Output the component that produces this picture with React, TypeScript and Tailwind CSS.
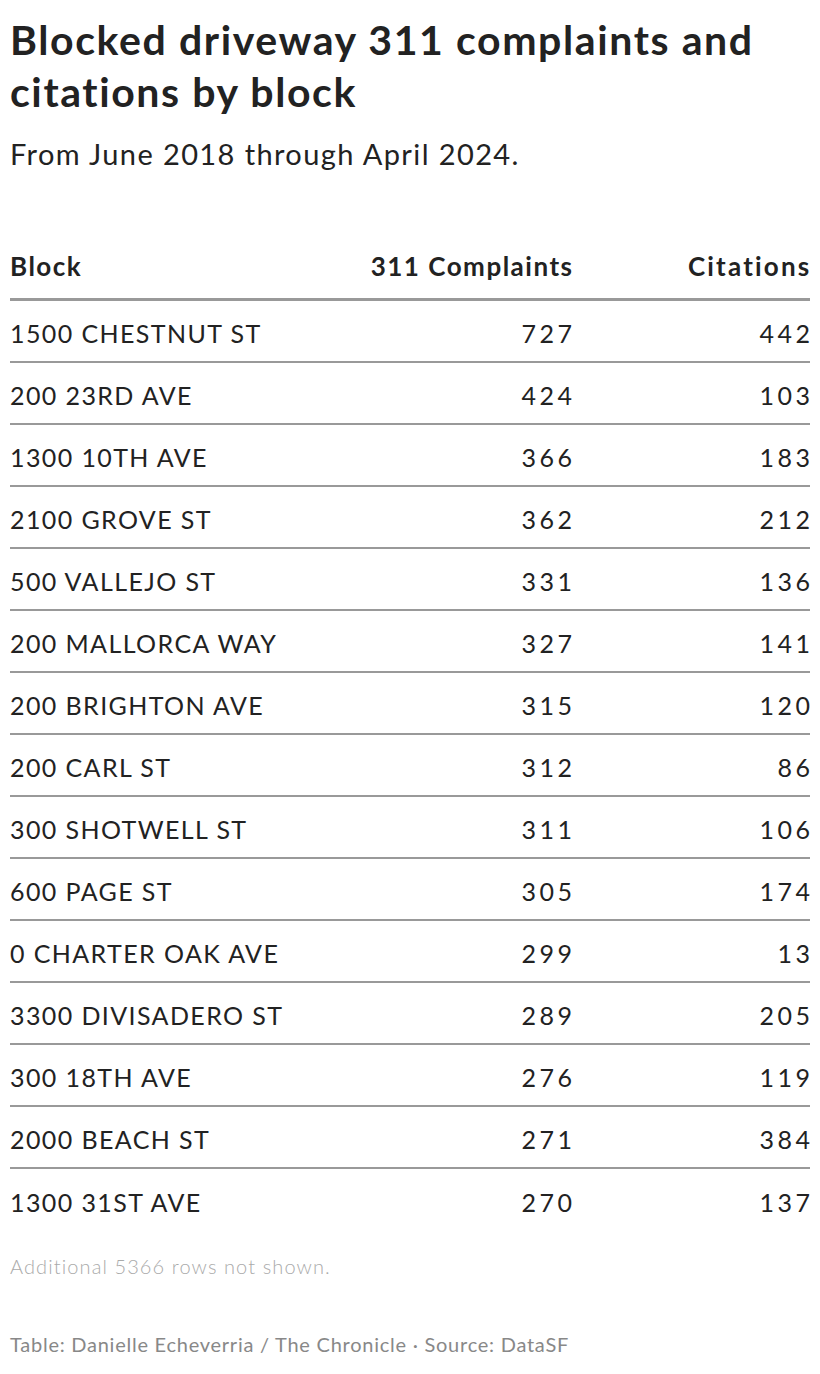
import React from 'react';

const rows: [string, number, number][] = [
  ['1500 CHESTNUT ST', 727, 442],
  ['200 23RD AVE', 424, 103],
  ['1300 10TH AVE', 366, 183],
  ['2100 GROVE ST', 362, 212],
  ['500 VALLEJO ST', 331, 136],
  ['200 MALLORCA WAY', 327, 141],
  ['200 BRIGHTON AVE', 315, 120],
  ['200 CARL ST', 312, 86],
  ['300 SHOTWELL ST', 311, 106],
  ['600 PAGE ST', 305, 174],
  ['0 CHARTER OAK AVE', 299, 13],
  ['3300 DIVISADERO ST', 289, 205],
  ['300 18TH AVE', 276, 119],
  ['2000 BEACH ST', 271, 384],
  ['1300 31ST AVE', 270, 137],
];

const App = () => {
  return (
    <div className="w-[820px] min-h-[1374px] bg-white px-[10px] pt-[14px] text-[#222] font-['Lato','Noto_Sans',sans-serif]">
      <h1 className="text-[41px] leading-[52px] font-bold tracking-[1.6px]">
        Blocked driveway 311 complaints and citations by block
      </h1>
      <p className="mt-[19px] text-[29px] leading-[34px] tracking-[1.4px] text-[#222]">From June 2018 through April 2024.</p>

      <div className="mt-[79px]">
        <div className="grid grid-cols-[1fr_200px_238px] items-end pb-[16px] border-b-[3px] border-[#999] text-[26px] leading-[32px] font-bold tracking-[1.5px] whitespace-nowrap">
          <div>Block</div>
          <div className="flex justify-end"><span className="mr-[-1.5px]">311 Complaints</span></div>
          <div className="flex justify-end"><span className="mr-[-1.5px] tracking-[2.2px]">Citations</span></div>
        </div>
        {rows.map(([block, complaints, citations], i) => (
          <div
            key={block}
            className={`grid grid-cols-[1fr_200px_238px] items-center h-[62px] pt-[6px] text-[25px] ${i < rows.length - 1 ? 'border-b-2 border-[#999]' : ''}`}
          >
            <div className="tracking-[1.4px]">{block}</div>
            <div className="text-right tracking-[3.5px]"><span className="mr-[-3.5px]">{complaints}</span></div>
            <div className="text-right tracking-[3.5px]"><span className="mr-[-3.5px]">{citations}</span></div>
          </div>
        ))}
      </div>

      <p className="mt-[20px] text-[20px] text-[#aaa] font-light tracking-[1.1px]">Additional 5366 rows not shown.</p>
      <p className="mt-[48px] text-[20px] text-[#888] tracking-[0.75px]">Table: Danielle Echeverria / The Chronicle · Source: DataSF</p>
    </div>
  );
};

export default App;
